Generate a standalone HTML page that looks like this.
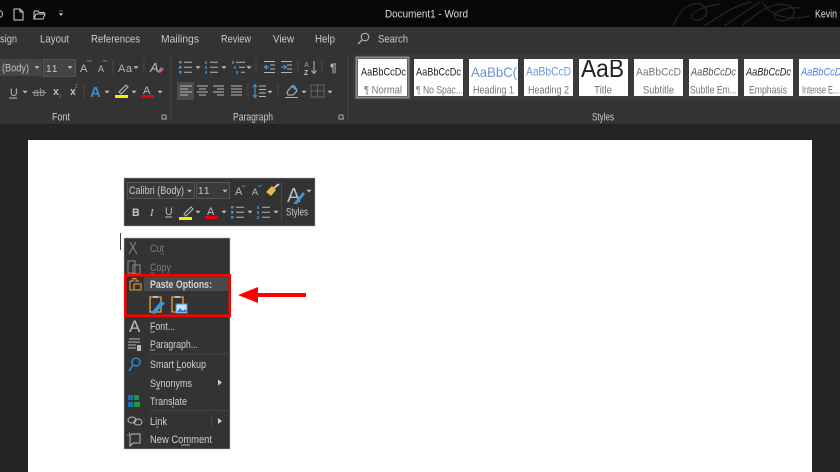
<!DOCTYPE html>
<html><head><meta charset="utf-8"><style>
html,body{margin:0;padding:0;width:840px;height:472px;overflow:hidden;background:#fff}
svg{display:block;filter:blur(.35px)}
text{font-family:"Liberation Sans",sans-serif;font-size:10.6px;fill:#c9c9c9}
</style></head><body>
<svg width="840" height="472" viewBox="0 0 840 472" xmlns="http://www.w3.org/2000/svg">
<defs>
<g id="dn"><path d="M-2.5-1.2H2.500L0 1.500Z" fill="#bdbdbd"/></g>
<g id="bul"><g fill="#3a96dd"><rect x="0" y="0" width="2.500" height="2.500"/><rect x="0" y="5" width="2.500" height="2.500"/><rect x="0" y="10" width="2.500" height="2.500"/></g><path d="M5 1.200H13M5 6.200H13M5 11.200H13" stroke="#b5b5b5" stroke-width="1"/></g>
<g id="num"><path d="M1 0V3M1 5V8M1 10V13" stroke="#3a96dd" stroke-width="1.400"/><path d="M5 1.200H13M5 6.200H13M5 11.200H13" stroke="#b5b5b5" stroke-width="1"/></g>
<g id="style"><rect x="0" y="0" width="49" height="37" fill="#fff"/></g>
<clipPath id="titleclip"><rect x="579" y="60" width="49" height="36"/></clipPath>
</defs>
<rect width="840" height="472" fill="#242424"/>
<!-- title bar -->
<rect width="840" height="27" fill="#070707"/>
<g fill="none" stroke="#262626" stroke-width="1.200">
<path d="M673 26C680 8 690 2 700 4C712 8 706 22 695 20C684 17 700 6 720 4M704 26C720 16 736 4 752 2M724 26L760 2M742 26C760 10 775 0 790 6C800 12 790 24 778 20C768 16 780 6 800 8M762 2C770 14 785 22 810 16"/>
</g>
<circle cx="-1" cy="14" r="3.500" fill="none" stroke="#bbb"/>
<path d="M14 9H20L23 12V20H14Z M20 9V12H23" fill="none" stroke="#d0d0d0" stroke-width="1"/>
<path d="M34 11H38L39 12.500H44V14M34 19V11M34 19H43L45 14H36L34 19Z" fill="none" stroke="#d0d0d0" stroke-width="1"/>
<path d="M59 11H63M59.500 13.500H62.500L61 15.500Z" fill="#c8c8c8" stroke="#c8c8c8" stroke-width=".6"/>
<text x="385" y="17.500" textLength="83" lengthAdjust="spacingAndGlyphs" style="fill:#dcdcdc">Document1 - Word</text>
<text x="815" y="17.500" textLength="22" lengthAdjust="spacingAndGlyphs" style="fill:#dcdcdc">Kevin</text>
<!-- tabs + ribbon -->
<rect y="27" width="840" height="97" fill="#333"/>
<g>
<text x="0" y="42.500" textLength="17" lengthAdjust="spacingAndGlyphs">sign</text>
<text x="40" y="42.500" textLength="29" lengthAdjust="spacingAndGlyphs">Layout</text>
<text x="91" y="42.500" textLength="49" lengthAdjust="spacingAndGlyphs">References</text>
<text x="161" y="42.500" textLength="38" lengthAdjust="spacingAndGlyphs">Mailings</text>
<text x="221" y="42.500" textLength="30" lengthAdjust="spacingAndGlyphs">Review</text>
<text x="273" y="42.500" textLength="21" lengthAdjust="spacingAndGlyphs">View</text>
<text x="315" y="42.500" textLength="20" lengthAdjust="spacingAndGlyphs">Help</text>
<text x="378" y="42.500" textLength="30" lengthAdjust="spacingAndGlyphs">Search</text>
</g>
<circle cx="365" cy="37" r="3.800" fill="none" stroke="#bdbdbd"/><path d="M362 40L358 44" stroke="#bdbdbd" stroke-width="1.200"/>
<!-- font controls -->
<rect x="-2" y="59" width="44" height="17" fill="#444"/><rect x="43.500" y="59.500" width="32" height="17" fill="#444" stroke="#555"/>
<text x="2" y="71.500" textLength="27" lengthAdjust="spacingAndGlyphs" style="fill:#c0c0c0">(Body)</text><use href="#dn" x="37" y="67.500"/>
<text x="46" y="72" style="fill:#c6c6c6;font-size:10px;letter-spacing:1px">11</text><use href="#dn" x="70" y="67.500"/>
<text x="80" y="72" style="font-size:11px;fill:#bbb">A</text><path d="M87 61H92" stroke="#3a96dd"/>
<text x="98" y="72" style="font-size:9px;fill:#bbb">A</text><path d="M103 61H107" stroke="#3a96dd"/>
<path d="M113 60V74" stroke="#4a4a4a"/>
<text x="118" y="72" textLength="14" style="font-size:11px;fill:#b5b5b5">Aa</text><use href="#dn" x="136" y="67.500"/>
<path d="M144 60V74" stroke="#4a4a4a"/>
<text x="150" y="72" style="font-size:13px;font-style:italic;fill:#bbb">A</text><path d="M157 72L161 67L164 69L160 73Z" fill="#b565a7"/>
<text x="10" y="96" style="fill:#bbb">U</text><path d="M9 98H17" stroke="#bbb"/><use href="#dn" x="25" y="92"/>
<text x="33" y="96" textLength="12" style="fill:#999">ab</text><path d="M32 92.500H46" stroke="#999"/>
<text x="53" y="95" style="font-weight:bold;fill:#bbb">x</text><text x="59" y="98" style="font-size:5px;fill:#3a96dd">2</text>
<text x="70" y="95" style="font-weight:bold;fill:#bbb">x</text><text x="75" y="88" style="font-size:5px;fill:#3a96dd">2</text>
<path d="M84 83V98" stroke="#4a4a4a"/>
<text x="90" y="97" style="font-size:15px;font-weight:bold;fill:#2f8fd8">A</text><use href="#dn" x="107" y="92"/>
<path d="M119 92L126 85L128 87L121 94Z" fill="none" stroke="#bbb"/><rect x="115" y="95" width="13" height="3" fill="#f5ec00"/><use href="#dn" x="134" y="92"/>
<text x="143" y="94" style="font-size:11px;fill:#bbb">A</text><rect x="141" y="95" width="13" height="3" fill="#e8000f"/><use href="#dn" x="160" y="92"/>
<path d="M171 54V121" stroke="#454545"/>
<!-- paragraph -->
<use href="#bul" x="179" y="61"/><use href="#dn" x="198" y="67.500"/>
<use href="#num" x="205" y="61"/><use href="#dn" x="224" y="67.500"/>
<g transform="translate(232 61)"><path d="M1 0V3M3 5V8M5 10V13" stroke="#3a96dd" stroke-width="1.400"/><path d="M4 1.200H13M7 6.200H13M9 11.200H13" stroke="#b5b5b5"/></g><use href="#dn" x="249" y="67.500"/>
<path d="M256 60V74" stroke="#4a4a4a"/>
<g stroke="#b5b5b5"><path d="M264 61.500H275M270 65H275M270 69H275M264 72.500H275"/><path d="M281 61.500H292M287 65H292M287 69H292M281 72.500H292"/></g>
<path d="M269 67H265M267 65L264.500 67L267 69" fill="none" stroke="#3a96dd" stroke-width="1.200"/><path d="M281 67H286M284 65L286.500 67L284 69" fill="none" stroke="#3a96dd" stroke-width="1.200"/>
<path d="M298 60V74" stroke="#4a4a4a"/>
<text x="304" y="67" style="font-size:7px;font-weight:bold;fill:#3a96dd">A</text><text x="304" y="75" style="font-size:7px;font-weight:bold;fill:#bbb">Z</text>
<path d="M314 61V73M311.500 70.500L314 73.500L316.500 70.500" fill="none" stroke="#b5b5b5"/>
<path d="M322 60V74" stroke="#4a4a4a"/>
<text x="330" y="72" style="font-size:12px;font-weight:bold;fill:#b8b8b8">¶</text>
<rect x="177" y="82" width="17" height="18" fill="#4c4c4c"/>
<g stroke="#b8b8b8"><path d="M180 86H192M180 89H188M180 92H192M180 95H188"/><path d="M197 86H208M199 89H206M197 92H208M199 95H206"/><path d="M213 86H224M217 89H224M213 92H224M217 95H224"/><path d="M231 86H242M231 89H242M231 92H242M231 95H242"/></g>
<path d="M248 83V98" stroke="#4a4a4a"/>
<path d="M255 85V97M253 87L255 84.500L257 87M253 95L255 97.500L257 95" fill="none" stroke="#3a96dd" stroke-width="1.200"/><path d="M259 86H266M259 89.500H266M259 93H266M259 96.500H266" stroke="#b5b5b5"/><use href="#dn" x="270" y="92"/>
<path d="M278 83V98" stroke="#4a4a4a"/>
<path d="M287 92L292 86L297 91L293 95H288Z" fill="none" stroke="#bbb"/><path d="M293 85L297 90" stroke="#3a96dd" stroke-width="2"/><path d="M285 97.500H298" stroke="#aaa"/><use href="#dn" x="304" y="92"/>
<path d="M311 85H324V97H311ZM317.500 85V97M311 91H324" fill="none" stroke="#666"/><use href="#dn" x="330" y="92"/>
<path d="M348 54V121" stroke="#454545"/>
<!-- styles -->
<rect x="353" y="55" width="487" height="45" fill="#3a3a3a"/>
<rect x="356.500" y="57.500" width="52" height="40" fill="none" stroke="#8c8c8c" stroke-width="2"/>
<g>
<use href="#style" x="358" y="59"/><use href="#style" x="414" y="59"/><use href="#style" x="469" y="59"/><use href="#style" x="524" y="59"/><use href="#style" x="579" y="59"/><use href="#style" x="634" y="59"/><use href="#style" x="689" y="59"/><use href="#style" x="744" y="59"/><use href="#style" x="799" y="59"/>
</g>
<g>
<text x="361" y="75.500" textLength="45" lengthAdjust="spacingAndGlyphs" style="fill:#222">AaBbCcDc</text>
<text x="416" y="75.500" textLength="45" lengthAdjust="spacingAndGlyphs" style="fill:#222">AaBbCcDc</text>
<text x="471" y="77" textLength="46" lengthAdjust="spacingAndGlyphs" style="font-size:14px;fill:#6a93d2">AaBbC(</text>
<text x="526" y="75.500" textLength="45" lengthAdjust="spacingAndGlyphs" style="font-size:12px;fill:#6f97d6">AaBbCcD</text>
<g clip-path="url(#titleclip)"><text x="581" y="77" textLength="43" lengthAdjust="spacingAndGlyphs" style="font-size:25px;fill:#222">AaB</text></g>
<text x="636" y="75.500" textLength="45" lengthAdjust="spacingAndGlyphs" style="fill:#777">AaBbCcD</text>
<text x="691" y="75.500" textLength="45" lengthAdjust="spacingAndGlyphs" style="font-style:italic;fill:#555">AaBbCcDc</text>
<text x="746" y="75.500" textLength="45" lengthAdjust="spacingAndGlyphs" style="font-style:italic;fill:#222">AaBbCcDc</text>
<text x="801" y="75.500" textLength="45" lengthAdjust="spacingAndGlyphs" style="font-style:italic;fill:#4f81d9">AaBbCcDc</text>
</g>
<g>
<text x="364" y="93.500" textLength="38" lengthAdjust="spacingAndGlyphs" style="fill:#777">¶ Normal</text>
<text x="416" y="93.500" textLength="47" lengthAdjust="spacingAndGlyphs" style="fill:#777">¶ No Spac...</text>
<text x="473" y="93.500" textLength="41" lengthAdjust="spacingAndGlyphs" style="fill:#777">Heading 1</text>
<text x="528" y="93.500" textLength="41" lengthAdjust="spacingAndGlyphs" style="fill:#777">Heading 2</text>
<text x="594" y="93.500" textLength="18" lengthAdjust="spacingAndGlyphs" style="fill:#777">Title</text>
<text x="643" y="93.500" textLength="31" lengthAdjust="spacingAndGlyphs" style="fill:#777">Subtitle</text>
<text x="690" y="93.500" textLength="47" lengthAdjust="spacingAndGlyphs" style="fill:#777">Subtle Em...</text>
<text x="749" y="93.500" textLength="38" lengthAdjust="spacingAndGlyphs" style="fill:#777">Emphasis</text>
<text x="802" y="93.500" textLength="37" lengthAdjust="spacingAndGlyphs" style="fill:#777">Intense E...</text>
</g>
<g>
<text x="52" y="120.500" textLength="18" lengthAdjust="spacingAndGlyphs" style="fill:#c8c8c8">Font</text>
<text x="233" y="120.500" textLength="40" lengthAdjust="spacingAndGlyphs" style="fill:#c8c8c8">Paragraph</text>
<text x="592" y="120.500" textLength="22" lengthAdjust="spacingAndGlyphs" style="fill:#c8c8c8">Styles</text>
</g>
<path d="M162 115H166V119M162 115V119H167" fill="none" stroke="#aaa"/><path d="M339 115H343V119M339 115V119H344" fill="none" stroke="#aaa"/>
<!-- doc -->
<rect x="28" y="140" width="784" height="332" fill="#fff"/>
<rect x="120" y="233" width="1" height="17" fill="#444"/>
<!-- mini toolbar -->
<rect x="124" y="178" width="191" height="48" fill="#333" stroke="#aaa" stroke-width=".5"/>
<rect x="127.500" y="182.500" width="67" height="16" fill="#3a3a3a" stroke="#555"/><rect x="196.500" y="182.500" width="33" height="16" fill="#3a3a3a" stroke="#555"/>
<text x="129" y="194" textLength="55" lengthAdjust="spacingAndGlyphs" style="fill:#c8c8c8">Calibri (Body)</text><use href="#dn" x="189.500" y="191"/>
<text x="198" y="194" style="fill:#c8c8c8;font-size:10px;letter-spacing:1px">11</text><use href="#dn" x="225" y="191"/>
<text x="235" y="195" style="font-size:11px;fill:#bbb">A</text><path d="M242 186H246" stroke="#3a96dd"/>
<text x="252" y="195" style="font-size:9px;fill:#bbb">A</text><path d="M258 186H262" stroke="#3a96dd"/>
<path d="M272 186L276 190L271 196L266 192Z" fill="#e8b84a"/><path d="M274 188L279 184" stroke="#ccc" stroke-width="2"/>
<path d="M281.500 182V222" stroke="#4a4a4a"/>
<text x="287" y="202" style="font-size:20px;fill:#bbb">A</text><path d="M293 204L303 192L305 194L297 204Z" fill="#3a96dd"/><use href="#dn" x="309" y="191"/>
<text x="286" y="215.500" textLength="22" lengthAdjust="spacingAndGlyphs" style="fill:#c8c8c8">Styles</text>
<text x="132" y="216" style="font-weight:bold;fill:#c8c8c8">B</text>
<text x="150" y="216" style="font-style:italic;font-family:'Liberation Serif';fill:#c8c8c8">I</text>
<text x="165" y="215" style="fill:#bbb">U</text><path d="M165 217H172" stroke="#bbb"/>
<path d="M184 214L191 207L193 209L186 216Z" fill="none" stroke="#bbb"/><rect x="179" y="217" width="13" height="3" fill="#f5ec00"/><use href="#dn" x="198" y="212"/>
<text x="207" y="215" style="font-size:11px;fill:#bbb">A</text><rect x="205" y="216" width="13" height="3" fill="#e8000f"/><use href="#dn" x="224" y="212"/>
<use href="#bul" x="231" y="206"/><use href="#dn" x="250" y="212"/>
<use href="#num" x="257" y="206"/><use href="#dn" x="276" y="212"/>
<!-- context menu -->
<rect x="124" y="238" width="106" height="211" fill="#333" stroke="#bbb" stroke-width=".5"/>
<path d="M130 242L137 254M136 242L129 254" stroke="#888" fill="none"/>
<path d="M128 261H135V273H128ZM133 265H140V274H133Z" fill="none" stroke="#888"/>
<text x="150" y="252" textLength="14" lengthAdjust="spacingAndGlyphs" style="fill:#7c7c7c">Cut</text>
<text x="150" y="271" textLength="21" lengthAdjust="spacingAndGlyphs" style="fill:#7c7c7c">Copy</text>
<path d="M161 254H164M150 273H155" stroke="#7c7c7c" stroke-width=".8"/>
<rect x="144" y="277" width="84" height="14" fill="#4a4a4a"/>
<text x="150" y="288" textLength="62" lengthAdjust="spacingAndGlyphs" style="font-weight:bold;fill:#d4d4d4">Paste Options:</text>
<path d="M130 281H133V278.500H136V281H139M130 281V290H133M134 284H141V290H134Z" fill="none" stroke="#e8a33d"/>
<path d="M150 297H161V312H150Z" fill="none" stroke="#e8a33d" stroke-width="1.300"/><path d="M153 296H158V298H153Z" fill="#bbb"/><path d="M151 313L161 301L165 303L155 314Z" fill="#3a96dd"/>
<path d="M172 297H183V312H172Z" fill="none" stroke="#e8a33d" stroke-width="1.300"/><path d="M175 296H180V298H175Z" fill="#bbb"/><rect x="176" y="304" width="11" height="9" fill="#cfe0f2" stroke="#3a96dd"/><path d="M177 312L180 308L183 311L185 309L187 312Z" fill="#2c7fcf"/>
<rect x="125.250" y="275.250" width="104.500" height="40.500" fill="none" stroke="#f00" stroke-width="2.500"/>
<text x="129" y="332" style="font-size:17px;fill:#bdbdbd">A</text>
<g>
<text x="150" y="330" textLength="25" lengthAdjust="spacingAndGlyphs" style="fill:#cfcfcf">Font...</text>
<text x="150" y="348" textLength="48" lengthAdjust="spacingAndGlyphs" style="fill:#cfcfcf">Paragraph...</text>
<text x="150" y="368" textLength="56" lengthAdjust="spacingAndGlyphs" style="fill:#cfcfcf">Smart Lookup</text>
<text x="150" y="387" textLength="42" lengthAdjust="spacingAndGlyphs" style="fill:#cfcfcf">Synonyms</text>
<text x="150" y="405" textLength="37" lengthAdjust="spacingAndGlyphs" style="fill:#cfcfcf">Translate</text>
<text x="150" y="425" textLength="17" lengthAdjust="spacingAndGlyphs" style="fill:#cfcfcf">Link</text>
<text x="150" y="443" textLength="62" lengthAdjust="spacingAndGlyphs" style="fill:#cfcfcf">New Comment</text>
</g>
<path d="M150 332H155M150 350H155M176 370H181M156 389H160M172 407H174M156 427H158M181 445H190" stroke="#cfcfcf" stroke-width=".8"/>
<path d="M129 339H140M128 342H140M128 345H136M128 348H136" stroke="#b5b5b5"/><path d="M137 345H141V351H137Z" fill="#bbb"/>
<path d="M149 354H230M149 410.500H230" stroke="#444"/>
<circle cx="136" cy="362" r="4" fill="none" stroke="#2f8fd8" stroke-width="1.300"/><path d="M133 365L129 371" stroke="#2f8fd8" stroke-width="1.500"/>
<path d="M218 379.500L222 382.500L218 385.500Z M218 418L222 421L218 424Z" fill="#ccc"/>
<path d="M211.500 415V427" stroke="#444"/>
<rect x="128" y="395" width="5" height="5" fill="#1e6fb5"/><rect x="128" y="402" width="5" height="5" fill="#1e6fb5"/><rect x="134" y="395" width="5" height="5" fill="#1a9a3a"/><rect x="134" y="402" width="6" height="5" fill="#1a9a3a"/>
<ellipse cx="132" cy="420" rx="4" ry="3" fill="none" stroke="#bbb"/><ellipse cx="138" cy="422" rx="4" ry="3" fill="none" stroke="#bbb"/>
<path d="M131 434H140V443H133L130 446V443H130V434" fill="none" stroke="#bbb"/><path d="M127 435H132M129.500 432V437" stroke="#3fb04a"/>
<!-- arrow -->
<rect x="255" y="293" width="51" height="4" fill="#f00"/><path d="M238 295L258 287V303Z" fill="#f00"/>
</svg>
</body></html>
